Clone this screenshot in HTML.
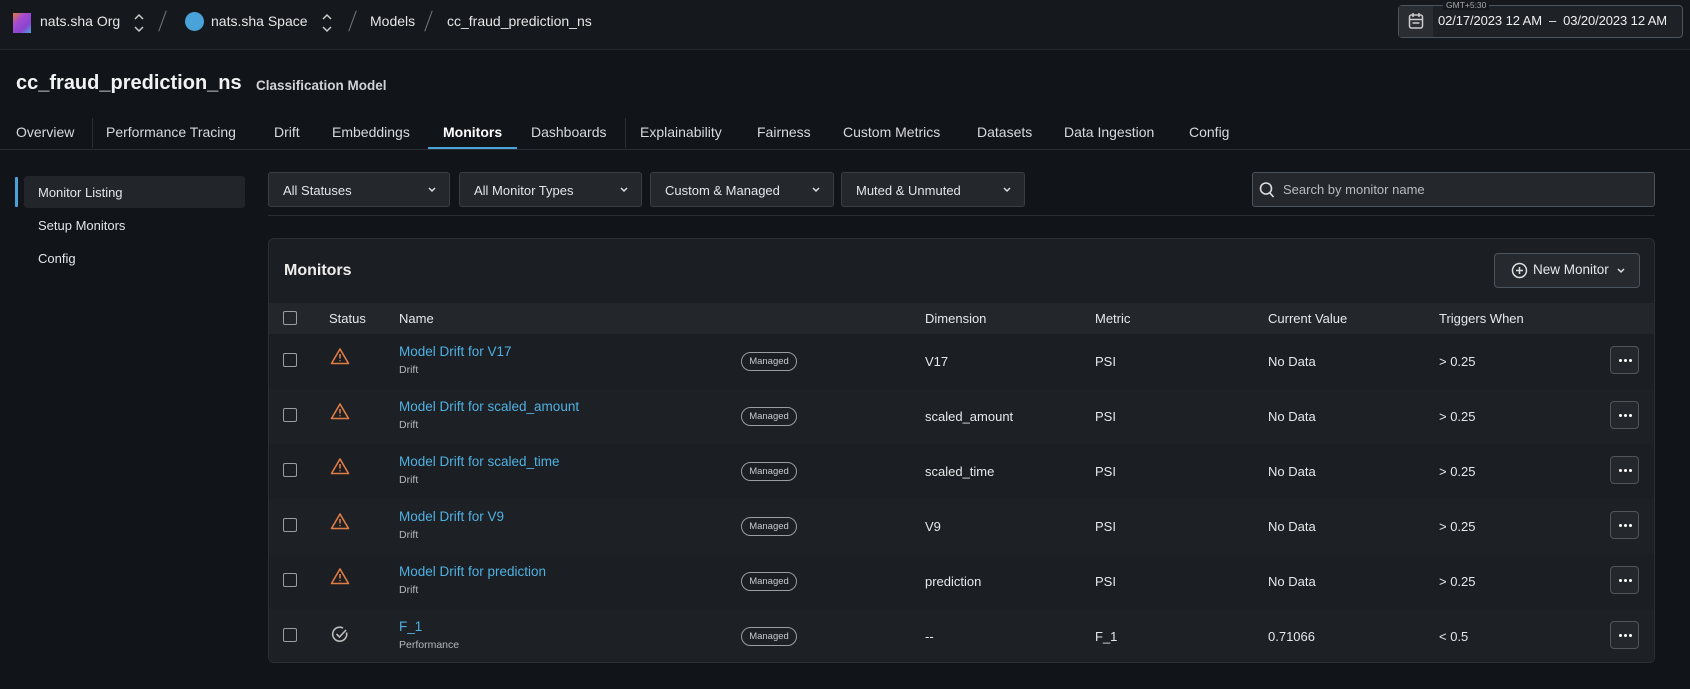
<!DOCTYPE html>
<html><head><meta charset="utf-8"><style>
*{box-sizing:border-box;margin:0;padding:0}
body{width:1690px;height:689px;background:#111418;font-family:"Liberation Sans",sans-serif;color:#e3e5e8;position:relative;overflow:hidden;font-size:14px}
.a{position:absolute;white-space:nowrap}
.top{position:absolute;left:0;top:0;width:1690px;height:50px;background:#15181c;border-bottom:1px solid #23262b}
.bc{font-size:14px;color:#e6e6e6;top:13px}
.slash{position:absolute;width:1px;height:22px;background:#777;transform:rotate(20deg);top:10px}
.tab{top:124px;font-size:14px;color:#d8dadd}
.sel{position:absolute;height:35px;background:#24272c;border:1px solid #3a3e44;border-radius:3px;top:172px;font-size:13px;color:#e3e5e8;padding:10px 0 0 14px}
.sel svg{position:absolute;right:12px;top:13px}
.card{position:absolute;left:268px;top:238px;width:1387px;height:425px;background:#1b1e22;border:1px solid #2c3035;border-radius:6px;overflow:hidden}
.row{position:absolute;left:0;width:1387px;height:55px}
.cb{position:absolute;width:14px;height:14px;border:1.5px solid #9a9da2;border-radius:2px}
.t{position:absolute;font-size:13px;color:#e6e8ea;white-space:nowrap}
.nm{color:#4fb1e3;font-size:13.5px}
.sub{font-size:10.5px;color:#b5b8bc}
.pill{position:absolute;left:472px;width:56px;height:19px;border:1px solid #9a9da2;border-radius:10px;font-size:9.5px;color:#c8cacd;text-align:center;line-height:17px}
.dots{position:absolute;left:1341px;width:29px;height:28px;border:1px solid #50555c;border-radius:4px;background:#24282d}
.dots i{position:absolute;top:12px;width:3px;height:3px;border-radius:50%;background:#fff}
</style></head><body>
<div class="top"></div>
<div class="a" style="left:13px;top:13px;width:18px;height:20px;background:linear-gradient(135deg,#e07a3a 0%,#a44bd1 35%,#8b45d0 70%,#4aa8e0 100%)"></div>
<div class="a bc" style="left:40px">nats.sha Org</div>
<svg class="a" style="left:134px;top:12px" width="10" height="22" viewBox="0 0 10 22"><path d="M1 7 L5 3 L9 7 M1 15 L5 19 L9 15" stroke="#ccc" stroke-width="1.5" fill="none"/></svg>
<div class="slash" style="left:162px"></div>
<div class="a" style="left:185px;top:12px;width:19px;height:19px;border-radius:50%;background:#4aa3d8"></div>
<div class="a bc" style="left:211px">nats.sha Space</div>
<svg class="a" style="left:322px;top:12px" width="10" height="22" viewBox="0 0 10 22"><path d="M1 7 L5 3 L9 7 M1 15 L5 19 L9 15" stroke="#ccc" stroke-width="1.5" fill="none"/></svg>
<div class="slash" style="left:352px"></div>
<div class="a bc" style="left:370px">Models</div>
<div class="slash" style="left:428px"></div>
<div class="a bc" style="left:447px">cc_fraud_prediction_ns</div>

<div class="a" style="left:1398px;top:5px;width:285px;height:33px;border:1px solid #4b5560;border-radius:4px;background:#1e2126"></div>
<div class="a" style="left:1399px;top:6px;width:34px;height:31px;background:#2a2d32"></div>
<div class="a" style="left:1443px;top:0px;font-size:8.5px;color:#aaa;background:#15181c;padding:0 3px">GMT+5:30</div>
<svg class="a" style="left:1408px;top:12px" width="16" height="18" viewBox="0 0 16 18"><rect x="1.5" y="3" width="13" height="13" rx="2" stroke="#ccc" stroke-width="1.5" fill="none"/><path d="M1.5 7.5h13M5 1v4M11 1v4M4.5 11h7" stroke="#ccc" stroke-width="1.5"/></svg>
<div class="a" style="left:1438px;top:13px;font-size:13px;color:#eee;letter-spacing:-0.1px">02/17/2023 12 AM &nbsp;–&nbsp; 03/20/2023 12 AM</div>

<div class="a" style="left:16px;top:72px;font-size:20px;font-weight:bold;color:#f1f2f3">cc_fraud_prediction_ns</div>
<div class="a" style="left:256px;top:78px;font-size:13.5px;font-weight:bold;color:#d0d2d5">Classification Model</div>

<div class="a tab" style="left:16px">Overview</div>
<div class="a" style="left:92px;top:118px;width:1px;height:30px;background:#2a2d32"></div>
<div class="a tab" style="left:106px">Performance Tracing</div>
<div class="a tab" style="left:274px">Drift</div>
<div class="a tab" style="left:332px">Embeddings</div>
<div class="a tab" style="left:443px;color:#fff;font-weight:bold">Monitors</div>
<div class="a tab" style="left:531px">Dashboards</div>
<div class="a" style="left:625px;top:118px;width:1px;height:30px;background:#2a2d32"></div>
<div class="a tab" style="left:640px">Explainability</div>
<div class="a tab" style="left:757px">Fairness</div>
<div class="a tab" style="left:843px">Custom Metrics</div>
<div class="a tab" style="left:977px">Datasets</div>
<div class="a tab" style="left:1064px">Data Ingestion</div>
<div class="a tab" style="left:1189px">Config</div>
<div class="a" style="left:0;top:149px;width:1690px;height:1px;background:#2a2d32"></div>
<div class="a" style="left:428px;top:147px;width:89px;height:2px;background:#4aa3d8"></div>

<div class="a" style="left:15px;top:177px;width:3px;height:30px;background:#4aa3d8;border-radius:1px"></div>
<div class="a" style="left:24px;top:176px;width:221px;height:32px;background:#22252a;border-radius:3px"></div>
<div class="a" style="left:38px;top:185px;font-size:13px">Monitor Listing</div>
<div class="a" style="left:38px;top:218px;font-size:13px">Setup Monitors</div>
<div class="a" style="left:38px;top:251px;font-size:13px">Config</div>

<div class="sel" style="left:268px;width:182px">All Statuses<svg width="10" height="8"><path d="M2 2l3 3 3-3" stroke="#ddd" stroke-width="1.5" fill="none"/></svg></div>
<div class="sel" style="left:459px;width:183px">All Monitor Types<svg width="10" height="8"><path d="M2 2l3 3 3-3" stroke="#ddd" stroke-width="1.5" fill="none"/></svg></div>
<div class="sel" style="left:650px;width:184px">Custom &amp; Managed<svg width="10" height="8"><path d="M2 2l3 3 3-3" stroke="#ddd" stroke-width="1.5" fill="none"/></svg></div>
<div class="sel" style="left:841px;width:184px">Muted &amp; Unmuted<svg width="10" height="8"><path d="M2 2l3 3 3-3" stroke="#ddd" stroke-width="1.5" fill="none"/></svg></div>
<div class="a" style="left:1252px;top:172px;width:403px;height:35px;border:1px solid #4b5560;border-radius:3px;background:#24272c"></div>
<svg class="a" style="left:1259px;top:181px" width="16" height="18" viewBox="0 0 16 18"><circle cx="7" cy="7.5" r="5.5" stroke="#ddd" stroke-width="1.6" fill="none"/><path d="M11 12l3.5 4" stroke="#ddd" stroke-width="1.6"/></svg>
<div class="a" style="left:1283px;top:182px;font-size:13px;color:#b8bbbf">Search by monitor name</div>
<div class="a" style="left:268px;top:215px;width:1387px;height:1px;background:#2a2d32"></div>

<div class="card">
<div class="t" style="left:15px;top:23px;font-size:16px;font-weight:bold;color:#eee">Monitors</div>
<div class="a" style="left:1225px;top:14px;width:146px;height:35px;border:1px solid #4b5560;border-radius:4px;background:#262a2f"></div>
<svg class="a" style="left:1242px;top:23px" width="17" height="17" viewBox="0 0 17 17"><circle cx="8.5" cy="8.5" r="7" stroke="#ddd" stroke-width="1.5" fill="none"/><path d="M8.5 5v7M5 8.5h7" stroke="#ddd" stroke-width="1.5"/></svg>
<div class="t" style="left:1264px;top:23px;font-size:13.5px">New Monitor</div>
<svg class="a" style="left:1347px;top:28px" width="10" height="8"><path d="M2 2l3 3 3-3" stroke="#ddd" stroke-width="1.5" fill="none"/></svg>

<div class="row" style="top:64px;height:31px;background:#23262b">
<div class="cb" style="left:14px;top:8px"></div>
<div class="t" style="left:60px;top:8px">Status</div>
<div class="t" style="left:130px;top:8px">Name</div>
<div class="t" style="left:656px;top:8px">Dimension</div>
<div class="t" style="left:826px;top:8px">Metric</div>
<div class="t" style="left:999px;top:8px">Current Value</div>
<div class="t" style="left:1170px;top:8px">Triggers When</div>
</div>

<div class="row" style="top:95px;background:#1b1e22">
<div class="cb" style="left:14px;top:19px"></div>
<svg class="a" style="left:61px;top:13px" width="20" height="18" viewBox="0 0 20 18"><path d="M10 2L18.5 16.5H1.5Z" stroke="#e07c45" stroke-width="1.6" fill="none" stroke-linejoin="round"/><path d="M10 7v4.5M10 13.2v1" stroke="#e07c45" stroke-width="1.6"/></svg>
<div class="t nm" style="left:130px;top:10px">Model Drift for V17</div><div class="t sub" style="left:130px;top:30px">Drift</div>
<div class="pill" style="top:18px">Managed</div>
<div class="t" style="left:656px;top:20px">V17</div><div class="t" style="left:826px;top:20px">PSI</div><div class="t" style="left:999px;top:20px">No Data</div><div class="t" style="left:1170px;top:20px">&gt; 0.25</div>
<div class="dots" style="top:12px"><i style="left:8px"></i><i style="left:13px"></i><i style="left:18px"></i></div>
</div>
<div class="row" style="top:150px;background:#1d2024">
<div class="cb" style="left:14px;top:19px"></div>
<svg class="a" style="left:61px;top:13px" width="20" height="18" viewBox="0 0 20 18"><path d="M10 2L18.5 16.5H1.5Z" stroke="#e07c45" stroke-width="1.6" fill="none" stroke-linejoin="round"/><path d="M10 7v4.5M10 13.2v1" stroke="#e07c45" stroke-width="1.6"/></svg>
<div class="t nm" style="left:130px;top:10px">Model Drift for scaled_amount</div><div class="t sub" style="left:130px;top:30px">Drift</div>
<div class="pill" style="top:18px">Managed</div>
<div class="t" style="left:656px;top:20px">scaled_amount</div><div class="t" style="left:826px;top:20px">PSI</div><div class="t" style="left:999px;top:20px">No Data</div><div class="t" style="left:1170px;top:20px">&gt; 0.25</div>
<div class="dots" style="top:12px"><i style="left:8px"></i><i style="left:13px"></i><i style="left:18px"></i></div>
</div>
<div class="row" style="top:205px;background:#1b1e22">
<div class="cb" style="left:14px;top:19px"></div>
<svg class="a" style="left:61px;top:13px" width="20" height="18" viewBox="0 0 20 18"><path d="M10 2L18.5 16.5H1.5Z" stroke="#e07c45" stroke-width="1.6" fill="none" stroke-linejoin="round"/><path d="M10 7v4.5M10 13.2v1" stroke="#e07c45" stroke-width="1.6"/></svg>
<div class="t nm" style="left:130px;top:10px">Model Drift for scaled_time</div><div class="t sub" style="left:130px;top:30px">Drift</div>
<div class="pill" style="top:18px">Managed</div>
<div class="t" style="left:656px;top:20px">scaled_time</div><div class="t" style="left:826px;top:20px">PSI</div><div class="t" style="left:999px;top:20px">No Data</div><div class="t" style="left:1170px;top:20px">&gt; 0.25</div>
<div class="dots" style="top:12px"><i style="left:8px"></i><i style="left:13px"></i><i style="left:18px"></i></div>
</div>
<div class="row" style="top:260px;background:#1d2024">
<div class="cb" style="left:14px;top:19px"></div>
<svg class="a" style="left:61px;top:13px" width="20" height="18" viewBox="0 0 20 18"><path d="M10 2L18.5 16.5H1.5Z" stroke="#e07c45" stroke-width="1.6" fill="none" stroke-linejoin="round"/><path d="M10 7v4.5M10 13.2v1" stroke="#e07c45" stroke-width="1.6"/></svg>
<div class="t nm" style="left:130px;top:10px">Model Drift for V9</div><div class="t sub" style="left:130px;top:30px">Drift</div>
<div class="pill" style="top:18px">Managed</div>
<div class="t" style="left:656px;top:20px">V9</div><div class="t" style="left:826px;top:20px">PSI</div><div class="t" style="left:999px;top:20px">No Data</div><div class="t" style="left:1170px;top:20px">&gt; 0.25</div>
<div class="dots" style="top:12px"><i style="left:8px"></i><i style="left:13px"></i><i style="left:18px"></i></div>
</div>
<div class="row" style="top:315px;background:#1b1e22">
<div class="cb" style="left:14px;top:19px"></div>
<svg class="a" style="left:61px;top:13px" width="20" height="18" viewBox="0 0 20 18"><path d="M10 2L18.5 16.5H1.5Z" stroke="#e07c45" stroke-width="1.6" fill="none" stroke-linejoin="round"/><path d="M10 7v4.5M10 13.2v1" stroke="#e07c45" stroke-width="1.6"/></svg>
<div class="t nm" style="left:130px;top:10px">Model Drift for prediction</div><div class="t sub" style="left:130px;top:30px">Drift</div>
<div class="pill" style="top:18px">Managed</div>
<div class="t" style="left:656px;top:20px">prediction</div><div class="t" style="left:826px;top:20px">PSI</div><div class="t" style="left:999px;top:20px">No Data</div><div class="t" style="left:1170px;top:20px">&gt; 0.25</div>
<div class="dots" style="top:12px"><i style="left:8px"></i><i style="left:13px"></i><i style="left:18px"></i></div>
</div>
<div class="row" style="top:370px;background:#1d2024">
<div class="cb" style="left:14px;top:19px"></div>
<svg class="a" style="left:62px;top:16px" width="18" height="18" viewBox="0 0 18 18"><path d="M15.5 7.5A7 7 0 1 1 12 3" stroke="#bbb" stroke-width="1.6" fill="none"/><path d="M5.5 9l3 3 6.5-7" stroke="#bbb" stroke-width="1.6" fill="none"/></svg>
<div class="t nm" style="left:130px;top:10px">F_1</div><div class="t sub" style="left:130px;top:30px">Performance</div>
<div class="pill" style="top:18px">Managed</div>
<div class="t" style="left:656px;top:20px">--</div><div class="t" style="left:826px;top:20px">F_1</div><div class="t" style="left:999px;top:20px">0.71066</div><div class="t" style="left:1170px;top:20px">&lt; 0.5</div>
<div class="dots" style="top:12px"><i style="left:8px"></i><i style="left:13px"></i><i style="left:18px"></i></div>
</div>
</div>
</body></html>
